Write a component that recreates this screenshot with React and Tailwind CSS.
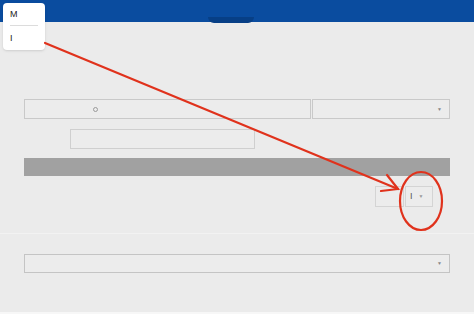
export default function App() {
  return (
    <div className="relative w-[474px] h-[314px] overflow-hidden bg-[#ebebeb] font-['Liberation_Sans',Arial,sans-serif]">
      {/* header */}
      <div className="relative h-[22px] bg-[#0a4c9f]">
        <div className="absolute left-[208px] top-[17px] h-[6px] w-[46px] rounded-b-[6px] bg-[#073f86]" />
      </div>

      <div className="px-6 pt-[77px]">
        <div className="flex h-[20px]">
          <div className="flex flex-1 items-center border border-[#c9c9c9] bg-[#ececec] pl-[68px]">
            <span className="h-[5px] w-[5px] rounded-full border border-[#9a9a9a]" />
          </div>
          <div className="ml-px flex w-[138px] items-center justify-end border border-[#c9c9c9] bg-[#ececec] pr-[7px]">
            <span className="text-[5px] leading-none text-[#888]">▼</span>
          </div>
        </div>

        <div className="ml-[46px] mt-[10px] h-[20px] w-[185px] border border-[#cfcfcf] bg-[#ececec]" />

        <div className="mt-[9px] h-[18px] bg-[#a1a1a1]" />

        <div className="mt-[10px] flex justify-end pr-[17px]">
          <div className="h-[21px] w-[29px] border border-[#d4d4d4] bg-[#ececec]" />
          <div className="ml-px flex h-[21px] w-[28px] items-center gap-[6px] border border-[#d4d4d4] bg-[#ececec] pl-[4px]">
            <span className="text-[9px] leading-none text-[#555]">I</span>
            <span className="text-[5px] leading-none text-[#999]">▼</span>
          </div>
        </div>
      </div>

      <div className="mt-[26px] border-t border-[#f2f2f2]" />

      <div className="px-6 pt-[20px]">
        <div className="flex h-[19px] items-center justify-end border border-[#c4c4c4] bg-[#ececec] pr-[7px]">
          <span className="text-[5px] leading-none text-[#888]">▼</span>
        </div>
      </div>

      <div className="absolute bottom-0 left-0 h-[2px] w-full bg-[#f7f7f7]" />

      {/* popup menu */}
      <div className="absolute left-[3px] top-[3px] w-[42px] rounded-[4px] bg-white px-[7px] shadow-sm">
        <div className="border-b border-[#dcdcdc] pt-[6px] pb-[5px] text-[9px] leading-[11px] text-[#222]">M</div>
        <div className="pt-[7px] pb-[6px] text-[9px] leading-[11px] text-[#222]">I</div>
      </div>

      {/* annotation */}
      <svg className="pointer-events-none absolute inset-0" width="474" height="314" viewBox="0 0 474 314">
        <g stroke="#e0321c" strokeWidth="2.2" fill="none" strokeLinecap="round">
          <line x1="45" y1="43" x2="398" y2="189" />
          <polyline points="387,175 398,189 381,191" />
          <ellipse cx="421" cy="201" rx="21" ry="29" />
        </g>
      </svg>
    </div>
  );
}
